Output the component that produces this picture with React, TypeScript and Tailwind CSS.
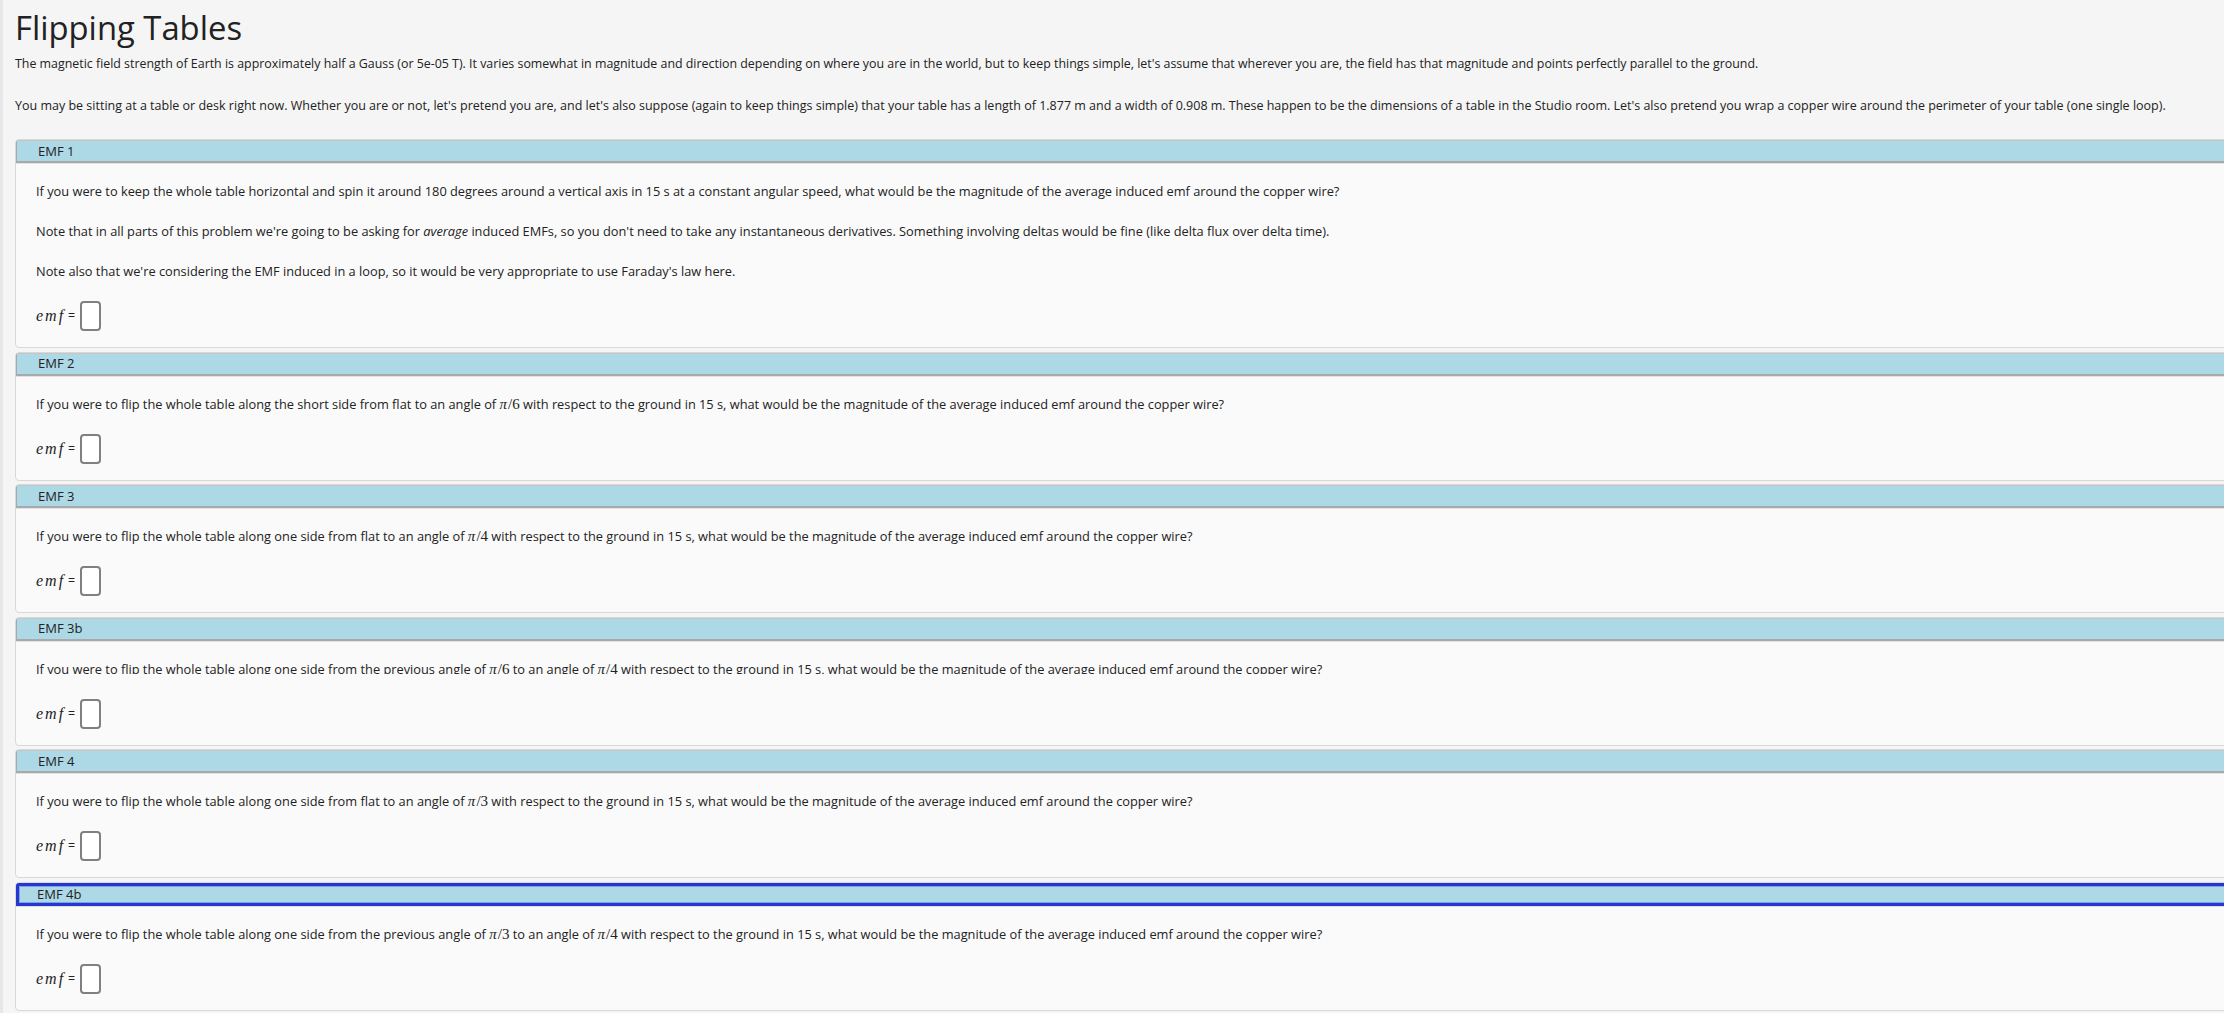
import React from "react";

const sans = { fontFamily: '"Open Sans", "Noto Sans", sans-serif' } as const;

function M({ children }: { children: React.ReactNode }) {
  return (
    <span className="text-[15px] leading-none" style={{ fontFamily: '"Liberation Serif", "DejaVu Serif", serif' }}>
      {children}
    </span>
  );
}

function Frac({ n }: { n: string }) {
  return (
    <M>
      <i className="mr-[1px]">π</i>/{n}
    </M>
  );
}

function EmfRow() {
  return (
    <div className="flex h-[30px] items-center">
      <span
        className="text-[16px] italic leading-none tracking-[2px] text-[#222]"
        style={{ fontFamily: '"Liberation Serif", "DejaVu Serif", serif' }}
      >
        emf
      </span>
      <span className="ml-[3px] mr-[5px] text-[12.4px] text-[#222]">=</span>
      <div className="h-[30px] w-[21px] rounded-[4px] border-2 border-[#808080] bg-white" />
    </div>
  );
}

function Card({
  title,
  focused,
  children,
}: {
  title: string;
  focused?: boolean;
  children: React.ReactNode;
}) {
  return (
    <div className="w-[2240px] overflow-hidden rounded-[4px] border border-[#d8d8d8] bg-[#fafafa]">
      <div
        className={
          focused
            ? "flex h-[23px] items-center border-[3px] border-[#2637cf] bg-[#add8e6] pl-[18px] shadow-[inset_0_0_0_1px_#7f9fe6,0_1px_0_#dedede]"
            : "flex h-[23px] items-center border-t border-l border-b-2 border-t-[#c6c6c6] border-l-[#a8a8a8] border-b-[#a7a9ab] bg-[#add8e6] pl-[21px] shadow-[0_1px_0_#e2e2e2]"
        }
      >
        <span className="text-[13px] leading-none text-[#222]">{title}</span>
      </div>
      <div className="flex flex-col gap-5 px-5 pt-[18px] pb-4 text-[12.8px] leading-[20px] text-[#222]">
        {children}
      </div>
    </div>
  );
}

export default function App() {
  return (
    <div
      className="h-screen w-full overflow-hidden border-l-[3px] border-[#e7e7e7] bg-[#f5f5f5] pl-3 pt-2"
      style={sans}
    >
      <h1 className="text-[32.8px] font-normal leading-[40px] text-[#222]">Flipping Tables</h1>
      <p className="mt-[6px] text-[12.4px] leading-[20px] text-[#222]">
        The magnetic field strength of Earth is approximately half a Gauss (or 5e-05 T). It varies somewhat in
        magnitude and direction depending on where you are in the world, but to keep things simple, let's assume that
        wherever you are, the field has that magnitude and points perfectly parallel to the ground.
      </p>
      <p className="mt-[22px] whitespace-nowrap text-[12.5px] leading-[20px] text-[#222]">
        You may be sitting at a table or desk right now. Whether you are or not, let's pretend you are, and let's also
        suppose (again to keep things simple) that your table has a length of 1.877 m and a width of 0.908 m. These
        happen to be the dimensions of a table in the Studio room. Let's also pretend you wrap a copper wire around the
        perimeter of your table (one single loop).
      </p>

      <div className="mt-[23px] flex flex-col gap-[3.5px]">
        <Card title="EMF 1">
          <p>
            If you were to keep the whole table horizontal and spin it around 180 degrees around a vertical axis in 15 s
            at a constant angular speed, what would be the magnitude of the average induced emf around the copper wire?
          </p>
          <p>
            Note that in all parts of this problem we're going to be asking for <i>average</i> induced EMFs, so you
            don't need to take any instantaneous derivatives. Something involving deltas would be fine (like delta flux
            over delta time).
          </p>
          <p>Note also that we're considering the EMF induced in a loop, so it would be very appropriate to use Faraday's law here.</p>
          <EmfRow />
        </Card>

        <Card title="EMF 2">
          <p>
            If you were to flip the whole table along the short side from flat to an angle of <Frac n="6" /> with
            respect to the ground in 15 s, what would be the magnitude of the average induced emf around the copper
            wire?
          </p>
          <EmfRow />
        </Card>

        <Card title="EMF 3">
          <p>
            If you were to flip the whole table along one side from flat to an angle of <Frac n="4" /> with respect to
            the ground in 15 s, what would be the magnitude of the average induced emf around the copper wire?
          </p>
          <EmfRow />
        </Card>

        <Card title="EMF 3b">
          <div className="h-[20px]">
            <p className="h-[15px] overflow-hidden">
              If you were to flip the whole table along one side from the previous angle of <Frac n="6" /> to an angle
              of <Frac n="4" /> with respect to the ground in 15 s, what would be the magnitude of the average induced
              emf around the copper wire?
            </p>
          </div>
          <EmfRow />
        </Card>

        <Card title="EMF 4">
          <p>
            If you were to flip the whole table along one side from flat to an angle of <Frac n="3" /> with respect to
            the ground in 15 s, what would be the magnitude of the average induced emf around the copper wire?
          </p>
          <EmfRow />
        </Card>

        <Card title="EMF 4b" focused>
          <p>
            If you were to flip the whole table along one side from the previous angle of <Frac n="3" /> to an angle of{" "}
            <Frac n="4" /> with respect to the ground in 15 s, what would be the magnitude of the average induced emf
            around the copper wire?
          </p>
          <EmfRow />
        </Card>
      </div>
    </div>
  );
}
